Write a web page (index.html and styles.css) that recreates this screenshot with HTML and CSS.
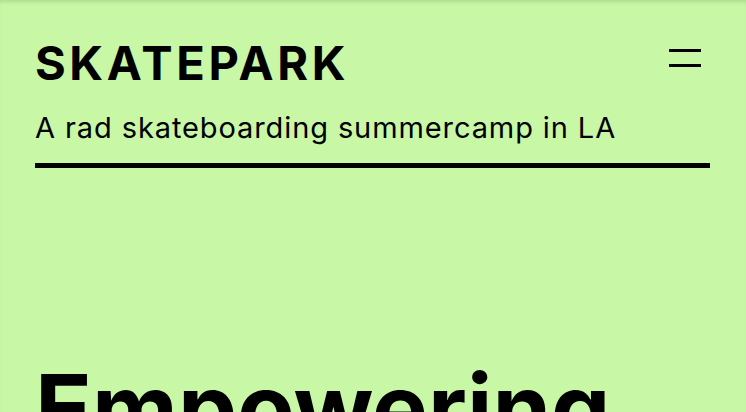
FILE: index.html
```html
<!DOCTYPE html>
<html lang="en">
<head>
<meta charset="utf-8">
<title>Skatepark</title>
<link rel="stylesheet" href="styles.css">
</head>
<body>
<div class="page">
  <header class="site-header">
    <div class="brand-row">
      <a class="logo" href="#">SKATEPARK</a>
      <button class="menu-btn" aria-label="Menu">
        <span class="menu-line"></span>
        <span class="menu-line"></span>
      </button>
    </div>
    <p class="tagline">A rad skateboarding summercamp in LA</p>
  </header>
  <main class="hero">
    <h1 class="hero-title">Empowering</h1>
  </main>
</div>
</body>
</html>
```
FILE: styles.css
```css
html, body {
  margin: 0;
  padding: 0;
}
body {
  background: #c8f7a5;
  font-family: Inter, "Liberation Sans", sans-serif;
  color: #000;
  overflow: hidden;
}
.page {
  min-height: 412px;
  box-shadow: inset 0 4px 4px -2px rgba(0,0,0,0.12);
  padding: 0 36px 0 35px;
}
.site-header {
  padding-top: 38px;
  border-bottom: 5px solid #000;
}
.brand-row {
  display: flex;
  justify-content: space-between;
  align-items: flex-start;
}
.logo {
  font-size: 47px;
  font-weight: 700;
  line-height: 50px;
  color: #000;
  text-decoration: none;
  letter-spacing: 3.6px;
}
.menu-btn {
  background: none;
  border: 0;
  padding: 0;
  margin: 11px 9px 0 0;
  width: 32px;
  height: 18px;
  display: flex;
  flex-direction: column;
  justify-content: space-between;
}
.menu-line {
  display: block;
  height: 3px;
  width: 32px;
  background: #000;
}
.tagline {
  margin: 22px 0 0;
  font-size: 29px;
  line-height: 36px;
  letter-spacing: 0.9px;
  padding-bottom: 17px;
}
.hero {
  padding-top: 193px;
}
.hero-title {
  margin: 0;
  font-size: 94px;
  font-weight: 700;
  line-height: 1;
}
```
